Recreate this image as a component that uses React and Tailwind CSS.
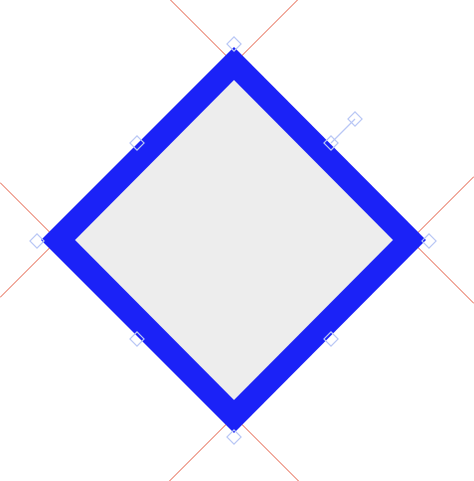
const RED = "#e2583f";
const HANDLE = "#b9c7f5";

function Handle({ x, y }) {
  return (
    <rect
      x={x - 5}
      y={y - 5}
      width="10"
      height="10"
      fill="none"
      stroke={HANDLE}
      strokeWidth="1.2"
      transform={`rotate(45 ${x} ${y})`}
    />
  );
}

export default function App() {
  const handles = [
    [234, 44],
    [37, 241],
    [429, 241],
    [234, 437],
    [137, 143],
    [331, 143],
    [137, 339],
    [331, 339],
    [355, 119],
  ];

  return (
    <div className="h-[481px] w-[474px] overflow-hidden bg-white">
      <svg width="474" height="481" viewBox="0 0 474 481" className="block">
        {/* guide lines, extensions of the stroke centre */}
        <g stroke={RED} strokeWidth="1">
          <line x1="170.5" y1="0" x2="474" y2="303.5" />
          <line x1="297.5" y1="0" x2="0" y2="297.5" />
          <line x1="0" y1="182.5" x2="298.5" y2="481" />
          <line x1="474" y1="176.5" x2="169.5" y2="481" />
        </g>

        <polygon points="234,47 426,240 234,433 41,240" fill="#1b22f7" />
        <polygon points="234,80 393,240 234,400 75,240" fill="#ededed" />

        <line x1="331" y1="143" x2="355" y2="119" stroke={HANDLE} strokeWidth="1.2" />
        {handles.map(([x, y]) => (
          <Handle key={`${x}-${y}`} x={x} y={y} />
        ))}
      </svg>
    </div>
  );
}
